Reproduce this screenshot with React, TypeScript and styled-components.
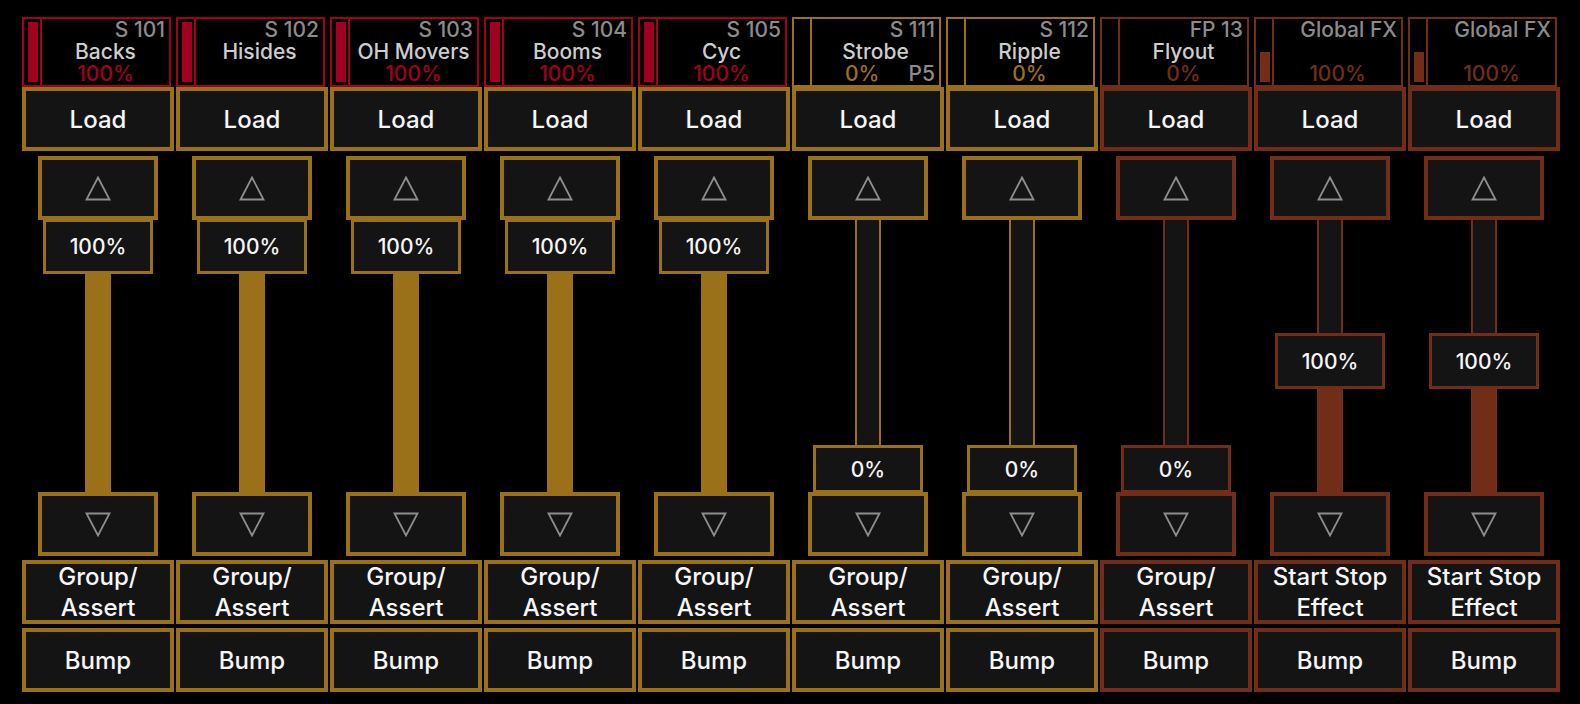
import React from "react";
import styled, { createGlobalStyle } from "styled-components";

const RED = "#a1001f";
const GOLD = "#9a7119";
const BROWN = "#722d18";

const GlobalStyle = createGlobalStyle`
  body {
    margin: 0;
    background: #000;
    font-family: Inter, "Liberation Sans", sans-serif;
  }
  * {
    box-sizing: border-box;
  }
`;

const Board = styled.div`
  display: grid;
  grid-template-columns: repeat(10, 152px);
  column-gap: 2px;
  padding: 17px 20px 0 22px;
  height: 704px;
`;

const Strip = styled.div`
  display: flex;
  flex-direction: column;
  align-items: center;
`;

const Header = styled.div<{ $color: string }>`
  align-self: flex-start;
  width: 149px;
  height: 70px;
  border: 2px solid ${(p) => p.$color};
  display: flex;
  font-size: 21px;
  font-weight: 500;
  line-height: 22px;
`;

const LevelCell = styled.div<{ $color: string }>`
  width: 18px;
  border-right: 2px solid ${(p) => p.$color};
  padding: 3px 2px 3px 4px;
  display: flex;
  flex-direction: column;
  justify-content: flex-end;
`;

const LevelBar = styled.div<{ $color: string }>`
  width: 10px;
  background: ${(p) => p.$color};
`;

const Labels = styled.div`
  flex: 1;
  display: flex;
  flex-direction: column;
  padding-right: 4px;
`;

const IdLine = styled.div`
  text-align: right;
  color: #8b8b8b;
  height: 22px;
`;

const NameLine = styled.div`
  text-align: center;
  color: #cdcdcd;
  height: 22px;
  padding-left: 4px;
`;

const PctLine = styled.div`
  display: flex;
  height: 22px;
  padding-left: 4px;
`;

const Pct = styled.span<{ $color: string }>`
  flex: 1;
  text-align: center;
  color: ${(p) => p.$color};
`;

const Extra = styled.span`
  color: #8b8b8b;
`;

const WideButton = styled.div<{ $color: string; $gap?: number }>`
  width: 152px;
  height: 64px;
  margin-top: ${(p) => p.$gap ?? 0}px;
  border: 4px solid ${(p) => p.$color};
  background: #141414;
  color: #f6f6f6;
  font-size: 24px;
  font-weight: 500;
  line-height: 31px;
  display: flex;
  align-items: center;
  justify-content: center;
  text-align: center;
  white-space: nowrap;
`;

const ArrowButton = styled.div<{ $color: string; $gap?: number }>`
  width: 120px;
  height: 64px;
  margin-top: ${(p) => p.$gap ?? 0}px;
  border: 4px solid ${(p) => p.$color};
  background: #141414;
  display: flex;
  align-items: center;
  justify-content: center;
  position: relative;
  z-index: 1;
`;

const Fader = styled.div`
  height: 272px;
  display: flex;
  flex-direction: column;
  align-items: center;
`;

const EmptyTrack = styled.div<{ $color: string; $h: number }>`
  width: 26px;
  height: ${(p) => p.$h}px;
  flex-shrink: 0;
  border-left: 2px solid ${(p) => p.$color};
  border-right: 2px solid ${(p) => p.$color};
  background: #141414;
`;

const FillTrack = styled.div<{ $color: string }>`
  width: 26px;
  flex: 1;
  background: ${(p) => p.$color};
`;

const Thumb = styled.div<{ $color: string; $h: number; $lift: number }>`
  width: 110px;
  height: ${(p) => p.$h}px;
  flex-shrink: 0;
  margin-top: ${(p) => -p.$lift}px;
  border: 3px solid ${(p) => p.$color};
  background: #141414;
  color: #f6f6f6;
  font-size: 21px;
  font-weight: 500;
  display: flex;
  align-items: center;
  justify-content: center;
`;

const Arrow = ({ down }: { down?: boolean }) => (
  <svg width="26" height="25" viewBox="0 0 26 25">
    <polygon
      points={down ? "1.5,1.5 24.5,1.5 13,23.5" : "13,1.5 24.5,23.5 1.5,23.5"}
      fill="none"
      stroke="#8e8e8e"
      strokeWidth="1.8"
      strokeLinejoin="miter"
    />
  </svg>
);

type StripData = {
  id: string;
  name: string;
  pct: string;
  extra?: string;
  head: string;
  btn: string;
  level: number;
  empty: number;
  thumbH: number;
  thumbText: string;
  fill: boolean;
  action: React.ReactNode;
};

const groupLabel = (
  <>
    Group/
    <br />
    Assert
  </>
);
const fxLabel = (
  <>
    Start Stop
    <br />
    Effect
  </>
);

const full = { level: 100, empty: 0, thumbH: 55, thumbText: "100%", fill: true };
const zero = { level: 0, empty: 225, thumbH: 48, thumbText: "0%", fill: false };
const fx = { level: 50, empty: 113, thumbH: 56, thumbText: "100%", fill: true };

const strips: StripData[] = [
  { id: "S 101", name: "Backs", pct: "100%", head: RED, btn: GOLD, ...full, action: groupLabel },
  { id: "S 102", name: "Hisides", pct: "", head: RED, btn: GOLD, ...full, action: groupLabel },
  { id: "S 103", name: "OH Movers", pct: "100%", head: RED, btn: GOLD, ...full, action: groupLabel },
  { id: "S 104", name: "Booms", pct: "100%", head: RED, btn: GOLD, ...full, action: groupLabel },
  { id: "S 105", name: "Cyc", pct: "100%", head: RED, btn: GOLD, ...full, action: groupLabel },
  { id: "S 111", name: "Strobe", pct: "0%", extra: "P5", head: GOLD, btn: GOLD, ...zero, action: groupLabel },
  { id: "S 112", name: "Ripple", pct: "0%", head: GOLD, btn: GOLD, ...zero, action: groupLabel },
  { id: "FP 13", name: "Flyout", pct: "0%", head: BROWN, btn: BROWN, ...zero, action: groupLabel },
  { id: "Global FX", name: "", pct: "100%", head: BROWN, btn: BROWN, ...fx, action: fxLabel },
  { id: "Global FX", name: "", pct: "100%", head: BROWN, btn: BROWN, ...fx, action: fxLabel },
];

function App() {
  return (
    <>
      <GlobalStyle />
      <Board>
        {strips.map((s, i) => (
          <Strip key={i}>
            <Header $color={s.head}>
              <LevelCell $color={s.head}>
                <LevelBar $color={s.head} style={{ height: `${s.level}%` }} />
              </LevelCell>
              <Labels>
                <IdLine>{s.id}</IdLine>
                <NameLine>{s.name}</NameLine>
                <PctLine>
                  <Pct $color={s.head}>{s.pct}</Pct>
                  {s.extra && <Extra>{s.extra}</Extra>}
                </PctLine>
              </Labels>
            </Header>
            <WideButton $color={s.btn}>Load</WideButton>
            <ArrowButton $color={s.btn} $gap={5}>
              <Arrow />
            </ArrowButton>
            <Fader>
              {s.empty > 0 && <EmptyTrack $color={s.btn} $h={s.empty} />}
              <Thumb $color={s.btn} $h={s.thumbH} $lift={s.empty > 0 ? 0 : 1}>
                {s.thumbText}
              </Thumb>
              {s.fill && <FillTrack $color={s.btn} />}
            </Fader>
            <ArrowButton $color={s.btn}>
              <Arrow down />
            </ArrowButton>
            <WideButton $color={s.btn} $gap={4}>
              {s.action}
            </WideButton>
            <WideButton $color={s.btn} $gap={4}>
              Bump
            </WideButton>
          </Strip>
        ))}
      </Board>
    </>
  );
}

export default App;
